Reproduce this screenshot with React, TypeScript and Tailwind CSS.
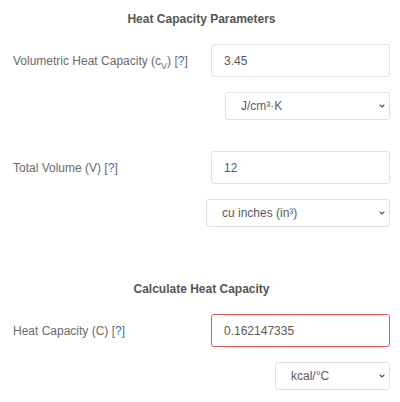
import { ChevronDown } from "lucide-react";

const font = { fontFamily: '"Liberation Sans", Arial, sans-serif' };

function Help() {
  return <span className="text-[#1f6fd1]">?</span>;
}

function FieldRow({ label, value, error }: { label: React.ReactNode; value: string; error?: boolean }) {
  return (
    <div className="flex items-center">
      <div className="flex-1 text-[12px] text-[#6a6a6a]">{label}</div>
      <input
        readOnly
        value={value}
        className={
          "w-[179px] h-[33px] rounded-[3px] bg-white px-[12px] text-[12px] text-[#5a5a5a] outline-none border " +
          (error ? "border-[#e05a5a]" : "border-[#e0e0e0]")
        }
      />
    </div>
  );
}

function UnitSelect({ value, width }: { value: string; width: string }) {
  return (
    <div className="flex justify-end">
      <div className={"relative h-[28px] " + width}>
        <select
          defaultValue={value}
          className="h-full w-full appearance-none rounded-[3px] border border-[#e0e0e0] bg-white pl-[15px] pr-[20px] text-[12px] text-[#5a5a5a] outline-none"
        >
          <option>{value}</option>
        </select>
        <ChevronDown
          size={8}
          strokeWidth={3.5}
          className="pointer-events-none absolute right-[4px] top-1/2 -translate-y-1/2 text-[#555]"
        />
      </div>
    </div>
  );
}

export default function App() {
  return (
    <div style={font} className="w-[400px] h-[402px] bg-white pl-[13px] pr-[10px] pt-[11px]">
      <h2 className="h-[16px] text-center text-[12px] leading-[16px] font-bold text-[#555]">
        Heat Capacity Parameters
      </h2>

      <div className="mt-[17px]">
        <FieldRow
          label={
            <>
              Volumetric Heat Capacity (c<sub className="text-[9px] align-[-2px]">V</sub>) [<Help />]
            </>
          }
          value="3.45"
        />
      </div>
      <div className="mt-[15px]">
        <UnitSelect value="J/cm³·K" width="w-[165px]" />
      </div>

      <div className="mt-[31px]">
        <FieldRow
          label={
            <>
              Total Volume (V) [<Help />]
            </>
          }
          value="12"
        />
      </div>
      <div className="mt-[15px]">
        <UnitSelect value="cu inches (in³)" width="w-[184px]" />
      </div>

      <h2 className="mt-[54px] h-[16px] text-center text-[12px] leading-[16px] font-bold text-[#555]">
        Calculate Heat Capacity
      </h2>

      <div className="mt-[17px]">
        <FieldRow
          label={
            <>
              Heat Capacity (C) [<Help />]
            </>
          }
          value="0.162147335"
          error
        />
      </div>
      <div className="mt-[15px]">
        <UnitSelect value="kcal/°C" width="w-[115px]" />
      </div>
    </div>
  );
}
